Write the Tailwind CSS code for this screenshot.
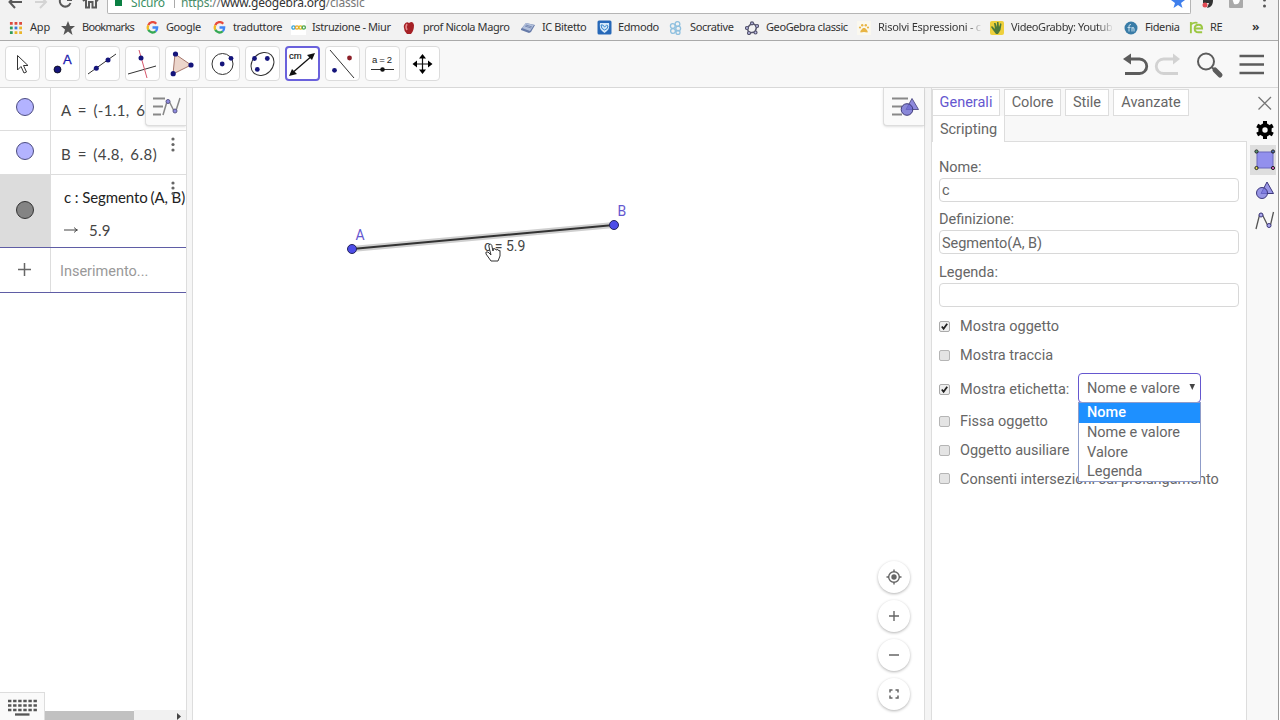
<!DOCTYPE html>
<html lang="it">
<head>
<meta charset="utf-8">
<title>GeoGebra Classic</title>
<script src="https://cdn.jsdelivr.net/npm/@tailwindcss/browser@4"></script>
</head>
<body class="w-[1280px] h-[720px] overflow-hidden bg-white font-[Roboto,sans-serif] text-[#666] relative">
<div class="flex flex-col w-[1279px] h-[720px] border-r border-[#999]">

<!-- address bar -->
<header class="h-[14px] shrink-0 bg-[#f2f2f2] flex overflow-hidden">
  <svg class="w-[107px] h-[14px] shrink-0" viewBox="0 0 107 14" fill="none" stroke="#5a5a5a" stroke-width="2">
    <path d="M10 2H22M15-4L9.500 2L15 8"/><path d="M35 2H46M40-4L46 2L40 8" stroke="#d4d4d4"/>
    <path d="M70.500 3A5.500 5.500 0 1 1 69-3M67 0H71V-5"/><path d="M83 1L90-5L98 1M86 0V7.500H89V2H92.500V7.500H96V0"/>
  </svg>
  <div class="w-[1084px] h-[14px] bg-white border-l border-b border-r border-[#b5b5b5] rounded-b-[2px] flex items-start font-['Noto_Sans',sans-serif] text-[12px] leading-[16px] whitespace-nowrap">
    <svg class="w-[23px] h-[12px] shrink-0" viewBox="0 0 23 12"><path d="M7-3H14V6H7Z" fill="#0b8043"/></svg>
    <div class="-mt-[5px] w-[43px] text-[#3b8f64] tracking-[-0.15px]">Sicuro</div>
    <div class="-mt-[5px] w-[822px] tracking-[-0.2px] text-[#777]"><span class="inline-block w-px h-3 bg-[#aaa] -mb-px mr-[6px]"></span><span class="text-[#4a8c69]">https:</span>//<span class="text-[#333]">www.geogebra.org</span>/classic</div>
    <div class="flex-1"></div>
    <svg class="w-[16px] h-[12px] mr-[4px]" viewBox="0 0 16 12"><path d="M8-6L10 0H15L11 3L12.500 8L8 5L3.500 8L5 3L1 0H6Z" fill="#3f7fec"/></svg>
  </div>
  <svg class="w-[87px] h-[14px]" viewBox="1191 0 87 14"><path d="M1203 0H1213C1213 4 1212 7 1207 8L1209 3H1203Z" fill="#333"/><circle cx="1205" cy="5" r="2.500" fill="#e24a53"/><rect x="1229" y="-5" width="14" height="13" rx="1" fill="#aaa"/><path d="M1232-2H1240C1240 3 1238 5 1234 4Z" fill="#fff"/><g fill="#555"><circle cx="1264.500" cy="0" r="1.500"/><circle cx="1264.500" cy="6" r="1.500"/></g></svg>
</header>

<!-- bookmarks -->
<nav class="h-[27px] shrink-0 bg-[#f2f2f2] border-b border-[#aaa] pl-[9px] pt-px grid grid-cols-[52px_85px_67px_78px_111px_119px_76px_72px_76px_112px_133px_134px_65px_62px_20px] items-center font-['Noto_Sans',sans-serif] text-[11px] text-[#333] whitespace-nowrap tracking-[-0.4px]">
  <div class="flex items-center gap-[7px]"><svg class="size-[13px]" viewBox="0 0 14 14"><g fill="#dc4b3e"><path d="M1 1h3v3H1zM6 1h3v3H6zM11 1h3v3h-3z"/></g><path d="M1 6h3v3H1z" fill="#2f9b58"/><path d="M6 6h3v3H6z" fill="#3c79d8"/><path d="M11 6h3v3h-3z" fill="#eab52b"/><path d="M1 11h3v3H1z" fill="#2f9b58"/><path d="M6 11h3v3H6zM11 11h3v3h-3z" fill="#eab52b"/></svg><span class="tracking-[-0.2px] pl-px">App</span></div>
  <div class="flex items-center gap-[7px]"><svg class="size-[14px]" viewBox="0 0 14 14"><path d="M7 0L9 5H14L10 8.500L11.500 14L7 10.500L2.500 14L4 8.500L0 5H5Z" fill="#555"/></svg><span class="tracking-[-0.7px]">Bookmarks</span></div>
  <div class="flex items-center gap-[7px]"><svg class="size-[13px]" viewBox="0 0 14 14" fill="none" stroke-width="2.500"><path d="M11 3A5 5 0 0 0 2.500 4.500" stroke="#e74b3c"/><path d="M2.500 4.500A5.500 5.500 0 0 0 2.500 9.500" stroke="#f2b91f"/><path d="M2.500 9.500A5 5 0 0 0 10.500 11" stroke="#34a853"/><path d="M10.500 11Q12 9.500 12 7H7" stroke="#4285f4"/></svg><span>Google</span></div>
  <div class="flex items-center gap-[7px]"><svg class="size-[13px]" viewBox="0 0 14 14" fill="none" stroke-width="2.500"><path d="M11 3A5 5 0 0 0 2.500 4.500" stroke="#e74b3c"/><path d="M2.500 4.500A5.500 5.500 0 0 0 2.500 9.500" stroke="#f2b91f"/><path d="M2.500 9.500A5 5 0 0 0 10.500 11" stroke="#34a853"/><path d="M10.500 11Q12 9.500 12 7H7" stroke="#4285f4"/></svg><span>traduttore</span></div>
  <div class="flex items-center gap-[6px]"><svg class="size-[15px] bg-white" viewBox="0 0 15 15" fill="none" stroke-width="1.400"><circle cx="2.500" cy="7.500" r="1.600" stroke="#3ba6d8"/><circle cx="6" cy="7.500" r="1.600" stroke="#e8a92e"/><circle cx="9.500" cy="7.500" r="1.600" stroke="#d9ba25"/><circle cx="12.800" cy="7.500" r="1.600" stroke="#54aa57"/></svg><span>Istruzione - Miur</span></div>
  <div class="flex items-center gap-[7px]"><svg class="size-[14px]" viewBox="0 0 14 14"><path d="M2 4Q4 0 7 2Q11-1 12 4Q12 10 9 13H5Q1 9 2 4Z" fill="#a52126"/><path d="M5 3Q3 6 5 9" stroke="#e58b8b" stroke-width="1.500" fill="none"/></svg><span>prof Nicola Magro</span></div>
  <div class="flex items-center gap-[7px]"><svg class="size-[14px]" viewBox="0 0 14 14"><path d="M0 8L5 2L14 4L10 11L8 12L0 9Z" fill="#667aa8"/><path d="M1 7L5 2L13 4L9 10Z" fill="#b1bfdb"/><path d="M4 5L10 7M5 4L11 6" stroke="#7c8db5"/></svg><span>IC Bitetto</span></div>
  <div class="flex items-center gap-[7px]"><svg class="size-[15px] -mr-px" viewBox="0 0 15 15"><rect x=".5" y=".5" width="14" height="14" rx="1.500" fill="#2668b8"/><path d="M3 3H12Q13 8 10 11L7.500 13L5 11Q2 8 3 3Z" fill="#d4e9f9"/><path d="M4 5Q6 4 7.500 7Q10 4 11 6Q11 9 7.500 10Q4 9 4 5" stroke="#3986cb" fill="none"/></svg><span>Edmodo</span></div>
  <div class="flex items-center gap-[7px]"><svg class="size-[14px]" viewBox="0 0 14 14" fill="none" stroke="#8fc0df" stroke-width="1.300"><circle cx="8.500" cy="3" r="2.400"/><circle cx="3.800" cy="5" r="2.400"/><circle cx="9.200" cy="7.500" r="2.400"/><circle cx="4" cy="10" r="2.400"/><circle cx="9" cy="11.500" r="2"/></svg><span>Socrative</span></div>
  <div class="flex items-center gap-[7px]"><svg class="size-[14px]" viewBox="0 0 14 14" fill="#bfc0ed" stroke="#55546c" stroke-width="1.200"><path d="M2 7L7 2L12 5L10 11L4 12Z" fill="none" stroke-width="1.500"/><circle cx="2" cy="7" r="1.500"/><circle cx="7" cy="2.300" r="1.500"/><circle cx="12" cy="5" r="1.500"/><circle cx="10.500" cy="11.500" r="1.500"/><circle cx="4" cy="12" r="1.500"/></svg><span>GeoGebra classic</span></div>
  <div class="flex items-center gap-[7px]"><svg class="size-[14px] bg-[#faf8ef]" viewBox="0 0 14 14" fill="#e8b545"><path d="M3.500 11.500Q2.500 10 6 7H8Q11.500 10 10.500 11.500L7 11Z"/><circle cx="3" cy="6.500" r="1.100"/><circle cx="5.200" cy="4.300" r="1.200"/><circle cx="8.800" cy="4.300" r="1.200"/><circle cx="11" cy="6.500" r="1.100"/></svg><span class="tracking-[-0.25px] bg-gradient-to-r from-[#333] from-85% to-[#ddd] bg-clip-text text-transparent">Risolvi Espressioni - c</span></div>
  <div class="flex items-center gap-[7px]"><svg class="size-[14px]" viewBox="0 0 14 14"><rect width="14" height="14" rx="2" fill="#eed03c"/><path d="M2 5L5 8L4 2H5.500L7 6V1H8.500L9 6L10.500 2L11.500 3L10.500 9L8 13H6L3 9L1 6Z" fill="#4d793a"/></svg><span class="tracking-[-0.4px] bg-gradient-to-r from-[#333] from-85% to-[#ddd] bg-clip-text text-transparent">VideoGrabby: Youtub</span></div>
  <div class="flex items-center gap-[7px]"><svg class="size-[14px]" viewBox="0 0 14 14"><circle cx="7" cy="7" r="6.500" fill="#397ca7"/><path d="M5 10.500V5Q5 3.500 7 3.500M3.500 6.500H6.500M8 6V10.500M8 7Q10 5.500 10 8V10.500" stroke="#c8dfec" fill="none"/></svg><span>Fidenia</span></div>
  <div class="flex items-center gap-[6px]"><svg class="size-[15px]" viewBox="0 0 16 16" fill="none" stroke="#9cc743" stroke-width="2"><path d="M2 14V2M2 5Q4 2 9 3M7 9H14Q14 5 10.500 5Q6 5 6 9Q6 13 10 13H14"/></svg><span>RE</span></div>
  <div class="text-[13px] font-semibold pb-px pl-px">»</div>
</nav>

<!-- tools -->
<div class="h-[47px] shrink-0 bg-[#f8f8f8] border-b border-[#d8d8d8] flex items-start pt-[5px] pl-[5px] gap-[5px] pr-[12px]">
  <div class="size-[35px] bg-white border border-[#dcdcdc] rounded-[4px]"><svg class="size-[33px]" viewBox="0 0 33 33" fill="#fff" stroke="#333"><path d="M11.500 8.500V23L15 19.500L18 26L20.500 25L17.500 18.500H22Z"/></svg></div>
  <div class="size-[35px] bg-white border border-[#dcdcdc] rounded-[4px]"><svg class="size-[33px]" viewBox="0 0 33 33"><circle cx="11.500" cy="22.500" r="3.500" fill="#15157b" stroke="#000" stroke-width=".7"/><text x="17" y="17" font-family="Liberation Sans" font-size="13" fill="#1919ad" stroke="#1919ad" stroke-width=".3">A</text></svg></div>
  <div class="size-[35px] bg-white border border-[#dcdcdc] rounded-[4px]"><svg class="size-[33px]" viewBox="0 0 33 33"><path d="M2 27L30 7" stroke="#333"/><g fill="#15157b"><circle cx="10.300" cy="21.300" r="2.500"/><circle cx="22" cy="13" r="2.500"/></g></svg></div>
  <div class="size-[35px] bg-white border border-[#dcdcdc] rounded-[4px]"><svg class="size-[33px]" viewBox="0 0 33 33"><path d="M2 27L30 19" stroke="#333"/><path d="M13 3L21 31" stroke="#d6566b"/><circle cx="15" cy="11" r="2.500" fill="#15157b"/></svg></div>
  <div class="size-[35px] bg-white border border-[#dcdcdc] rounded-[4px]"><svg class="size-[33px]" viewBox="0 0 33 33"><path d="M9 7L25 18L7 27Z" fill="#ecd5cb" stroke="#a5766b"/><g fill="#15157b"><circle cx="9.500" cy="7" r="2.600"/><circle cx="25" cy="18" r="2.600"/><circle cx="7.200" cy="26.700" r="2.600"/></g></svg></div>
  <div class="size-[35px] bg-white border border-[#dcdcdc] rounded-[4px]"><svg class="size-[33px]" viewBox="0 0 33 33"><circle cx="16.500" cy="17" r="10.500" fill="none" stroke="#333"/><g fill="#15157b"><circle cx="16.200" cy="17" r="2.400"/><circle cx="25" cy="11.300" r="2.400"/></g></svg></div>
  <div class="size-[35px] bg-white border border-[#dcdcdc] rounded-[4px]"><svg class="size-[33px]" viewBox="0 0 33 33"><ellipse cx="16.500" cy="17" rx="12.500" ry="10.300" transform="rotate(-45 16.500 17)" fill="none" stroke="#333"/><g fill="#15157b"><circle cx="8.500" cy="11.500" r="2.400"/><circle cx="21.300" cy="11.500" r="2.400"/><circle cx="11.300" cy="22.400" r="2.400"/></g></svg></div>
  <div class="size-[35px] bg-white border-2 border-[#6a61dc] rounded-[4px]"><svg class="size-[31px]" viewBox="1 1 31 31"><text x="3" y="11.500" font-family="Liberation Sans" font-size="9.500" fill="#111" stroke="#111" stroke-width=".15">cm</text><path d="M5 27L27 8" stroke="#111" stroke-width="1.300"/><path d="M29 6L26 13L21 8ZM3 29L6 22L11 27Z" fill="#111"/></svg></div>
  <div class="size-[35px] bg-white border border-[#dcdcdc] rounded-[4px]"><svg class="size-[33px]" viewBox="0 0 33 33"><path d="M4 3L28 31" stroke="#333"/><circle cx="23.500" cy="11" r="2.400" fill="#8c2029"/><circle cx="8.500" cy="23.300" r="2.400" fill="#15157b"/></svg></div>
  <div class="size-[35px] bg-white border border-[#dcdcdc] rounded-[4px]"><svg class="size-[33px]" viewBox="0 0 33 33"><text x="6" y="16" textLength="20" font-family="Liberation Sans" font-size="9.500" fill="#222">a=2</text><path d="M5 22.500H28" stroke="#333"/><circle cx="16.500" cy="22.500" r="2.300" fill="#111"/></svg></div>
  <div class="size-[35px] bg-white border border-[#dcdcdc] rounded-[4px]"><svg class="size-[33px]" viewBox="0 0 33 33"><path d="M16.500 9V25M8 17H25" stroke="#111" stroke-width="1.200"/><path d="M16.500 7L20 11.500H13ZM16.500 27L13 22.500H20ZM6.500 17L11 13.500V20.500ZM26.500 17L22 13.500V20.500Z" fill="#000"/></svg></div>
  <div class="flex-1"></div>
  <svg class="w-[146px] h-[35px]" viewBox="1120 46 146 35" fill="none" stroke="#5c5c5c" stroke-width="2.800"><path d="M1128 59H1139.500A7 7 0 0 1 1139.500 73.500H1125"/><path d="M1123 59L1131 53.500V64.500Z" fill="#5c5c5c" stroke="none"/><g stroke="#d2d2d2"><path d="M1175 59H1163.500A7 7 0 0 0 1163.500 73.500H1178"/><path d="M1180 59L1173 53.500V64.500Z" fill="#d2d2d2" stroke="none"/></g><circle cx="1206" cy="61.500" r="8" stroke-width="2"/><path d="M1212 67.500L1215 70" stroke-width="2"/><path d="M1215 70L1220 75" stroke-width="5" stroke-linecap="round"/><path d="M1239.500 56H1264M1239.500 64.500H1264M1239.500 73H1264" stroke-width="2.500"/></svg>
</div>

<main class="flex flex-1 min-h-0">
  <!-- algebra view -->
  <section class="relative w-[186px] shrink-0 flex flex-col font-[Lato,sans-serif] text-[15px] text-[#444] whitespace-nowrap overflow-hidden">
    <div class="flex h-[43px] border-b border-[#ddd]"><div class="w-[51px] shrink-0 border-r border-[#ddd] pl-[16px] pt-[10px]"><div class="size-[18px] rounded-full bg-[#b3b3ff] border border-[#4c4c80]"></div></div><div class="pl-[10px] pt-[12px] leading-[20px] tracking-[0.35px] [word-spacing:2.500px]">A = (-1.1, 6.5)</div></div>
    <div class="flex h-[44px] border-b border-[#ddd]"><div class="w-[51px] shrink-0 border-r border-[#ddd] pl-[16px] pt-[11px]"><div class="size-[18px] rounded-full bg-[#b3b3ff] border border-[#4c4c80]"></div></div><div class="pl-[10px] pt-[13px] leading-[20px] tracking-[0.45px] [word-spacing:2.200px]">B = (4.8, 6.8)</div></div>
    <div class="flex h-[73px] border-b border-[#5f5da5]"><div class="w-[51px] shrink-0 bg-[#dcdcdc] border-r border-[#ddd] pl-[16px] pt-[26px]"><div class="size-[18px] rounded-full bg-[#848484] border border-[#333]"></div></div><div class="pl-[13px] pt-[12px] leading-[20px] text-[#222]"><div class="tracking-[-0.1px]">c : Segmento<span class="ml-[3px]">(A, B)</span></div><div class="flex items-center mt-[13px] text-[#444] tracking-[0.2px]"><svg class="w-[25px] h-[10px]" viewBox="0 0 25 10" fill="none" stroke="#444"><path d="M0 5H13M10.500 2.500Q11 4.500 13.500 5Q11 5.500 10.500 7.500"/></svg>5.9</div></div></div>
    <div class="flex h-[45px] border-b border-[#5f5da5]"><div class="w-[51px] shrink-0 border-r border-[#ddd] pl-[18px] pt-[15px]"><svg class="size-[13px]" viewBox="0 0 13 13"><path d="M6.500 0V13M0 6.500H13" stroke="#666" stroke-width="1.500"/></svg></div><div class="pl-[9px] pt-[14px] leading-[20px] font-[Roboto,sans-serif] text-[14.500px] text-[#999]">Inserimento...</div></div>
    <svg class="absolute left-[170px] top-[48px] w-[6px] h-[62px]" viewBox="0 0 6 62" fill="#666"><circle cx="3" cy="3" r="1.600"/><circle cx="3" cy="8.500" r="1.600"/><circle cx="3" cy="14" r="1.600"/><circle cx="3" cy="47" r="1.600"/><circle cx="3" cy="52" r="1.600"/><circle cx="3" cy="57.500" r="1.600"/></svg>
    <div class="absolute right-0 top-0 w-[41px] h-[38px] bg-[#fafafa] border-l border-b border-[#ddd] rounded-bl-[4px] shadow-sm"><svg class="w-[40px] h-[37px]" viewBox="146 88 40 37" fill="none" stroke="#888" stroke-width="2"><path d="M153 98.500H165M153 106.500H163M153 114.500H161"/><path d="M163 115L167 101.500Q168 99.500 169.500 102L173.500 110Q175 113 176.500 109L180 98" stroke-width="1.500"/><circle cx="168" cy="101.500" r="2" fill="#8d8ae0" stroke="#5c5988" stroke-width="1"/><circle cx="175" cy="111" r="2" fill="#8d8ae0" stroke="#5c5988" stroke-width="1"/></svg></div>
    <div class="mt-auto flex items-end h-[28px]"><div class="w-[45px] h-[28px] bg-[#fafafa] border-t border-r border-[#ddd]"><svg class="w-[44px] h-[27px]" viewBox="0 0 44 27" stroke="#555" stroke-width="2.300"><path d="M8 8H37M8 12.500H37M8 17H37" stroke-dasharray="3.400 1.700"/><path d="M15 21.500H29.500"/></svg></div><div class="w-[89px] h-[9px] bg-[#c1c1c1]"></div><div class="flex-1 h-[10px] bg-[#f1f1f1]"><svg class="ml-[42px] w-[8px] h-[10px]" viewBox="0 0 8 10"><path d="M1 3L5 6.500L1 10Z" fill="#444"/></svg></div></div>
  </section>
  <div class="w-[7px] shrink-0 bg-[#f6f6f6] border-x border-[#ddd]"></div>

  <!-- graphics view -->
  <section class="relative w-[731px] shrink-0 bg-white">
    <svg class="w-[731px] h-[632px]" viewBox="193 88 731 632" font-family="Roboto">
      <path d="M352 249L614 225" stroke="#cfcfcf" stroke-width="6"/><path d="M352 249L614 225" stroke="#333" stroke-width="2"/>
      <g fill="#4d4de8" stroke="#24245c"><circle cx="352" cy="249" r="4.500"/><circle cx="614" cy="225" r="4.500"/></g>
      <g fill="#6557cf" font-size="14"><text x="355.500" y="240">A</text><text x="617.500" y="216">B</text></g>
      <text x="484" y="251" font-size="14" fill="#444">c = 5.9</text>
      <path d="M489 247Q488 244 490.500 244Q492 244 492.500 249L493 251L493.500 248.500L495.500 249L496 250L498 249.500L499 251L500 250.500V256L498 261H491L486 254Q485 251 488 252L491 255Z" fill="#fff" stroke="#333"/>
    </svg>
    <div class="absolute right-0 top-0 w-[41px] h-[38px] bg-[#fafafa] border-l border-b border-[#ddd] rounded-bl-[4px] shadow-sm"><svg class="w-[40px] h-[37px]" viewBox="884 88 40 37" stroke="#888" stroke-width="2"><path d="M892 98.500H908M892 106.500H902M892 114.500H902"/><path d="M912 98.500L918.500 109.500H906Z" fill="#8e89dd" stroke="#5b588f" stroke-width="1"/><circle cx="907" cy="109.500" r="5.800" fill="#6d6ad0" fill-opacity=".8" stroke="#3c3877" stroke-width="1"/></svg></div>
    <div class="absolute right-[14px] top-[473px] flex flex-col gap-[7px]">
      <svg class="size-[32px] rounded-full bg-white shadow-[0_1px_3px_rgba(0,0,0,.3)]" viewBox="0 0 32 32" fill="none" stroke="#666" stroke-width="1.400"><circle cx="16" cy="16" r="5.300"/><circle cx="16" cy="16" r="2.700" fill="#666" stroke="none"/><path d="M16 8.500V11M16 21V23.500M8.500 16H11M21 16H23.500"/></svg>
      <svg class="size-[32px] rounded-full bg-white shadow-[0_1px_3px_rgba(0,0,0,.3)]" viewBox="0 0 32 32" stroke="#666" stroke-width="1.400"><path d="M16 11V21M11 16H21"/></svg>
      <svg class="size-[32px] rounded-full bg-white shadow-[0_1px_3px_rgba(0,0,0,.3)]" viewBox="0 0 32 32" stroke="#666" stroke-width="1.400"><path d="M11 16H21"/></svg>
      <svg class="size-[32px] rounded-full bg-white shadow-[0_1px_3px_rgba(0,0,0,.3)]" viewBox="0 0 32 32" fill="none" stroke="#666" stroke-width="1.500"><path d="M12 14.500V12H14.500M17.500 12H20V14.500M20 17.500V20H17.500M14.500 20H12V17.500"/></svg>
    </div>
  </section>
  <div class="w-[8px] shrink-0 bg-[#f4f4f4] border-x border-[#ddd]"></div>

  <!-- properties -->
  <section class="w-[315px] shrink-0 bg-[#f8f8f8] flex flex-col text-[14.500px] leading-[20px] whitespace-nowrap">
    <div class="flex gap-[4px] pt-px text-center">
      <div class="w-[68px] h-[27px] pt-[3px] bg-white border border-[#ddd] text-[#6557cf]">Generali</div>
      <div class="w-[57px] h-[27px] pt-[3px] bg-white border border-[#ddd] tracking-[-0.05px]">Colore</div>
      <div class="w-[44px] h-[27px] pt-[3px] bg-white border border-[#ddd]">Stile</div>
      <div class="w-[76px] h-[27px] pt-[3px] bg-white border border-[#ddd]">Avanzate</div>
    </div>
    <div class="flex h-[26px] text-center"><div class="w-[73px] bg-white border-r border-l border-[#ddd] pt-[4px]">Scripting</div><div class="flex-1 border-b border-[#ddd]"></div></div>
    <div class="flex-1 bg-white border-r border-[#ddd] pl-[7px] pt-[16px] pr-[7px]">
      <div class="h-[20px]">Nome:</div>
      <div class="h-[24px] w-[300px] border border-[#d8d8d8] rounded-[4px] pl-[2px] pt-[2px]">c</div>
      <div class="h-[20px] mt-[8px]">Definizione:</div>
      <div class="h-[24px] w-[300px] border border-[#d8d8d8] rounded-[4px] pl-[2px] pt-[3px] tracking-[-0.05px]">Segmento(A, B)</div>
      <div class="h-[20px] mt-[9px]">Legenda:</div>
      <div class="h-[24px] w-[300px] border border-[#d8d8d8] rounded-[4px]"></div>
      <div class="mt-[10px] flex items-center h-[20px] gap-[10px]"><svg class="size-[11px] -mt-px bg-[#eee] border border-[#aaa] rounded-[2px]" viewBox="0 0 10 10"><path d="M2 5L4 7.500L8 2" fill="none" stroke="#222" stroke-width="2"/></svg><span>Mostra oggetto</span></div>
      <div class="mt-[9px] flex items-center h-[20px] gap-[10px]"><div class="size-[11px] -mt-[2px] bg-[#e4e4e4] border border-[#b5b5b5] rounded-[2px]"></div><span>Mostra traccia</span></div>
      <div class="relative mt-[7px] flex items-center h-[30px] gap-[10px]"><svg class="size-[11px] mt-[2px] bg-[#eee] border border-[#aaa] rounded-[2px]" viewBox="0 0 10 10"><path d="M2 5L4 7.500L8 2" fill="none" stroke="#222" stroke-width="2"/></svg><span class="w-[108px] pt-[4px]">Mostra etichetta:</span>
        <div class="w-[123px] h-[30px] border border-[#6557cf] rounded-[4px] pl-[8px] pt-[2px] flex items-center"><span>Nome e valore</span><svg class="ml-auto mr-[4px] mb-[4px] w-[7px] h-[6px]" viewBox="0 0 7 6"><path d="M.5 0H6L3.300 6Z" fill="#444"/></svg></div>
        <div class="absolute left-[139px] top-[29px] w-[123px] h-[80px] bg-white border border-[#8f9cc9] leading-[19.500px]"><div class="bg-[#1e90ff] text-white pl-[8px] h-[20px] font-medium">Nome</div><div class="pl-[8px]">Nome e valore</div><div class="pl-[8px]">Valore</div><div class="pl-[8px]">Legenda</div></div>
      </div>
      <div class="mt-[9px] flex items-center h-[20px] gap-[10px]"><div class="size-[11px] -mt-[2px] bg-[#e4e4e4] border border-[#b5b5b5] rounded-[2px]"></div><span>Fissa oggetto</span></div>
      <div class="mt-[9px] flex items-center h-[20px] gap-[10px]"><div class="size-[11px] -mt-[2px] bg-[#e4e4e4] border border-[#b5b5b5] rounded-[2px]"></div><span>Oggetto ausiliare</span></div>
      <div class="mt-[8px] flex items-center h-[20px] gap-[10px]"><div class="size-[11px] -mt-[2px] bg-[#e4e4e4] border border-[#b5b5b5] rounded-[2px]"></div><span class="pt-px tracking-[-0.02px]">Consenti intersezioni sul prolungamento</span></div>
    </div>
  </section>
  <aside class="flex-1 bg-[#f8f8f8]"><svg class="w-[31px] h-[160px]" viewBox="1247 88 31 160" fill="none">
    <path d="M1258.500 97L1271 109.500M1271 97L1258.500 109.500" stroke="#777" stroke-width="1.300"/>
    <g stroke="#000"><circle cx="1265" cy="130" r="4.700" stroke-width="4"/><path d="M1265 121V124M1265 136V139M1257.200 125.500L1260 127M1270 133L1272.800 134.500M1257.200 134.500L1260 133M1270 127L1272.800 125.500" stroke-width="4"/></g>
    <path d="M1250 145H1276V175H1250Z" fill="#dedede"/><path d="M1257 152H1273V168H1257Z" fill="#9290ed" stroke="#6966bb"/><g stroke="#222"><circle cx="1256.500" cy="151.500" r="1.600" fill="#5a9c73"/><circle cx="1273" cy="151.500" r="1.600" fill="#4568ac"/><circle cx="1256.500" cy="168" r="1.600" fill="#e4df55"/><circle cx="1273" cy="168" r="1.600" fill="#d968c4"/></g>
    <g stroke="#3e397d"><path d="M1267 182L1273.500 193.500H1261Z" fill="#9a97e6"/><circle cx="1262" cy="193" r="5.500" fill="#7774df" fill-opacity=".75"/></g>
    <path d="M1256 229L1259.500 215Q1261 212 1262.500 215L1267.500 225Q1269 227.500 1270.500 225L1273.500 212" stroke="#555" stroke-width="1.300"/><g fill="#aaa8ec" stroke="#3e397d"><circle cx="1261" cy="215" r="2"/><circle cx="1269" cy="225.500" r="2"/></g>
  </svg></aside>
</main>
</div>
</body>
</html>
